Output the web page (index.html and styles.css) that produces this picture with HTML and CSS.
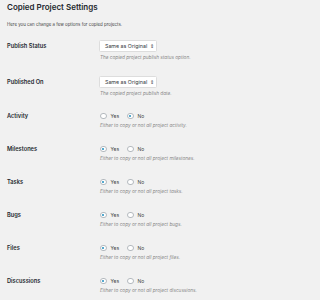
FILE: index.html
```html
<!DOCTYPE html>
<html>
<head>
<meta charset="utf-8">
<link rel="stylesheet" href="styles.css">
</head>
<body>
<div class="wrap">
  <h2 class="title">Copied Project Settings</h2>
  <p class="intro">Here you can change a few options for copied projects.</p>
  <div class="table">
    <div class="row sel-row">
      <div class="label">Publish Status</div>
      <div class="field">
        <div class="select"><span>Same as Original</span><span class="arrows">⇕</span></div>
        <div class="desc">The copied project publish status option.</div>
      </div>
    </div>
    <div class="row sel-row">
      <div class="label">Published On</div>
      <div class="field">
        <div class="select"><span>Same as Original</span><span class="arrows">⇕</span></div>
        <div class="desc">The copied project publish date.</div>
      </div>
    </div>
    <div class="row">
      <div class="label">Activity</div>
      <div class="field">
        <div class="radios"><span class="radio"></span><span class="rtext">Yes</span><span class="radio on"></span><span class="rtext">No</span></div>
        <div class="desc">Either to copy or not all project activity.</div>
      </div>
    </div>
    <div class="row">
      <div class="label">Milestones</div>
      <div class="field">
        <div class="radios"><span class="radio on"></span><span class="rtext">Yes</span><span class="radio"></span><span class="rtext">No</span></div>
        <div class="desc">Either to copy or not all project milestones.</div>
      </div>
    </div>
    <div class="row">
      <div class="label">Tasks</div>
      <div class="field">
        <div class="radios"><span class="radio on"></span><span class="rtext">Yes</span><span class="radio"></span><span class="rtext">No</span></div>
        <div class="desc">Either to copy or not all project tasks.</div>
      </div>
    </div>
    <div class="row">
      <div class="label">Bugs</div>
      <div class="field">
        <div class="radios"><span class="radio on"></span><span class="rtext">Yes</span><span class="radio"></span><span class="rtext">No</span></div>
        <div class="desc">Either to copy or not all project bugs.</div>
      </div>
    </div>
    <div class="row">
      <div class="label">Files</div>
      <div class="field">
        <div class="radios"><span class="radio on"></span><span class="rtext">Yes</span><span class="radio"></span><span class="rtext">No</span></div>
        <div class="desc">Either to copy or not all project files.</div>
      </div>
    </div>
    <div class="row">
      <div class="label">Discussions</div>
      <div class="field">
        <div class="radios"><span class="radio on"></span><span class="rtext">Yes</span><span class="radio"></span><span class="rtext">No</span></div>
        <div class="desc">Either to copy or not all project discussions.</div>
      </div>
    </div>
  </div>
</div>
</body>
</html>
```
FILE: styles.css
```css
html, body {
  margin: 0;
  padding: 0;
  background: #f1f1f1;
}
body {
  font-family: Inter, "Liberation Sans", sans-serif;
  color: #23282d;
}
.wrap {
  padding: 0 0 0 7px;
}
.title {
  margin: 0;
  padding-top: 3px;
  font-size: 8px;
  line-height: 9px;
  font-weight: 600;
  color: #23282d;
}
.intro {
  margin: 0;
  padding-top: 10px;
  font-size: 4.4px;
  line-height: 6px;
  color: #444;
}
.table {
  padding-top: 4px;
}
.row {
  display: grid;
  grid-template-columns: 92px 1fr;
  padding: 8px 0 9px;
}
.sel-row {
  padding: 8px 0;
}
.label {
  font-size: 5.7px;
  font-weight: 600;
  line-height: 8px;
  color: #23282d;
}
.sel-row .label {
  line-height: 11px;
}
.field {
  display: flex;
  flex-direction: column;
  align-items: flex-start;
  gap: 2px;
}
.select {
  box-sizing: border-box;
  height: 12px;
  width: 58px;
  padding: 0 2.5px 0 5px;
  background: #fff;
  border: 0.5px solid #ddd;
  border-radius: 1.5px;
  display: flex;
  align-items: center;
  justify-content: space-between;
  font-size: 5.3px;
  color: #32373c;
}
.arrows {
  font-size: 4.8px;
}
.desc {
  padding-left: 1px;
  font-size: 4.7px;
  line-height: 6px;
  font-style: italic;
  color: #8a8a8a;
}
.radios {
  display: flex;
  align-items: center;
  height: 8px;
  padding-left: 1px;
  font-size: 5px;
  color: #444;
}
.radio {
  box-sizing: border-box;
  width: 6.5px;
  height: 6.5px;
  border-radius: 50%;
  background: #fff;
  border: 0.5px solid #b4b9be;
  display: flex;
  align-items: center;
  justify-content: center;
}
.radio.on::after {
  content: "";
  width: 2px;
  height: 2px;
  border-radius: 50%;
  background: #1e8cbe;
}
.rtext {
  margin: 0 8px 0 4px;
}
```
